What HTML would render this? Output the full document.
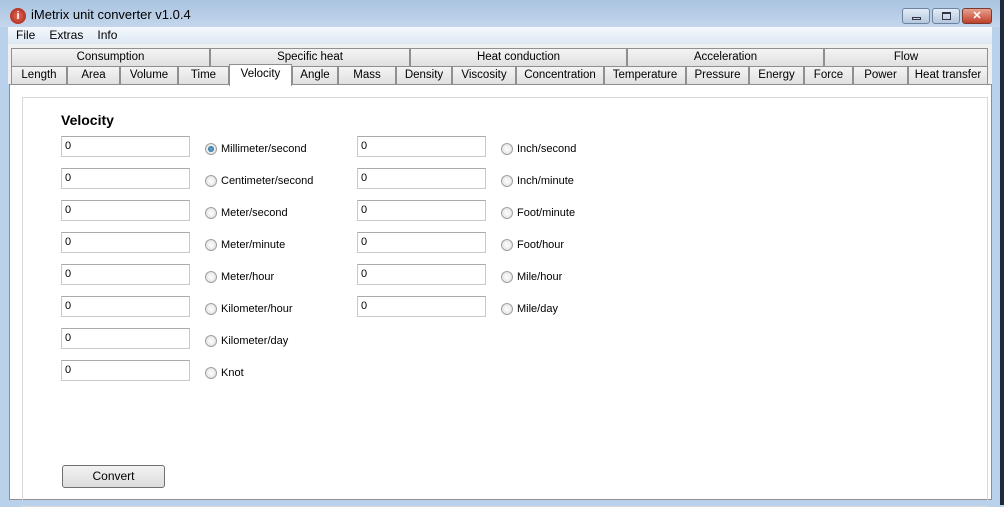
<!DOCTYPE html>
<html><head><style>
*{margin:0;padding:0;box-sizing:border-box}
body{width:1004px;height:505px;overflow:hidden;background:#b9d1ea;font-family:"Liberation Sans",sans-serif;font-size:11px;position:relative;color:#000}
.abs{position:absolute}
.title{left:0;top:0;width:1004px;height:27px;background:linear-gradient(#aac3df,#c3d6ec)}
.menu{left:8px;top:27px;width:984px;height:17px;background:linear-gradient(#f4f8fc,#dde8f4);font-size:12px}
.menu span{margin-left:8px;margin-right:6px;line-height:17px}
.tab{position:absolute;height:18px;border:1px solid #8e8f8f;border-bottom:none;background:linear-gradient(#f4f4f4,#e0e0e0);text-align:center;line-height:17px;font-size:11.5px;white-space:nowrap;overflow:hidden}
.panel{left:9px;top:84px;width:983px;height:416px;background:#fff;border:1px solid #8e8f8f}
.inp{position:absolute;width:129px;height:21px;border:1px solid #c9c9c9;border-top-color:#aaa;background:#fff;padding-left:3px;line-height:19px;font-size:11px}
.rad{position:absolute;width:12px;height:12px;border-radius:50%;border:1px solid #a0a0a0;background:radial-gradient(#fff,#ddd)}
.rad.on::after{content:"";position:absolute;left:2px;top:2px;width:6px;height:6px;border-radius:50%;background:radial-gradient(#6ab0d8,#1a5a8a)}
.lbl{position:absolute;font-size:11px}
</style></head><body>
<div class="abs title"></div>
<div class="abs" style="left:10px;top:8px;width:16px;height:16px;border-radius:50%;background:radial-gradient(#e86a5a,#a01c10);color:#fff;font-weight:bold;font-size:11px;text-align:center;line-height:16px">i</div>
<div class="abs" style="left:31px;top:7px;font-size:13px">iMetrix unit converter v1.0.4</div>
<div class="abs" style="left:902px;top:8px;width:28px;height:16px;border:1px solid #6d84a0;border-radius:3px;background:linear-gradient(#e4ecf6,#b4c7de)"><div class="abs" style="left:9px;top:8px;width:9px;height:3px;border:1px solid #334"></div></div>
<div class="abs" style="left:932px;top:8px;width:28px;height:16px;border:1px solid #6d84a0;border-radius:3px;background:linear-gradient(#e4ecf6,#b4c7de)"><div class="abs" style="left:9px;top:3px;width:9px;height:8px;border:1px solid #334;border-top-width:2px"></div></div>
<div class="abs" style="left:962px;top:8px;width:30px;height:16px;border:1px solid #7a3a30;border-radius:3px;background:linear-gradient(#e8a090,#c0402a);color:#fff;font-weight:bold;text-align:center;line-height:14px;font-size:11px">✕</div>
<div class="abs" style="left:1000px;top:0;width:4px;height:505px;background:#1e2a3a"></div>
<div class="abs menu"><span>File</span><span>Extras</span><span>Info</span></div>
<div class="abs" style="left:8px;top:44px;width:984px;height:40px;background:#f0f0f0"></div>

<div class="tab" style="left:11px;top:48px;width:199px">Consumption</div>
<div class="tab" style="left:210px;top:48px;width:200px">Specific heat</div>
<div class="tab" style="left:410px;top:48px;width:217px">Heat conduction</div>
<div class="tab" style="left:627px;top:48px;width:197px">Acceleration</div>
<div class="tab" style="left:824px;top:48px;width:164px">Flow</div>

<div class="tab" style="left:11px;top:66px;width:56px">Length</div>
<div class="tab" style="left:67px;top:66px;width:53px">Area</div>
<div class="tab" style="left:120px;top:66px;width:58px">Volume</div>
<div class="tab" style="left:178px;top:66px;width:51px">Time</div>
<div class="tab" style="left:292px;top:66px;width:46px">Angle</div>
<div class="tab" style="left:338px;top:66px;width:58px">Mass</div>
<div class="tab" style="left:396px;top:66px;width:56px">Density</div>
<div class="tab" style="left:452px;top:66px;width:64px">Viscosity</div>
<div class="tab" style="left:516px;top:66px;width:88px">Concentration</div>
<div class="tab" style="left:604px;top:66px;width:82px">Temperature</div>
<div class="tab" style="left:686px;top:66px;width:63px">Pressure</div>
<div class="tab" style="left:749px;top:66px;width:55px">Energy</div>
<div class="tab" style="left:804px;top:66px;width:49px">Force</div>
<div class="tab" style="left:853px;top:66px;width:55px">Power</div>
<div class="tab" style="left:908px;top:66px;width:80px">Heat transfer</div>

<div class="abs panel"></div>
<div class="tab" style="left:229px;top:64px;width:63px;height:22px;background:#fff;line-height:18px;z-index:2">Velocity</div>
<div class="abs" style="left:22px;top:97px;width:966px;height:410px;border:1px solid #d8d8d8"></div>

<div class="abs" style="left:61px;top:112px;font-size:14px;font-weight:bold">Velocity</div>

<div class="inp" style="left:61px;top:136px">0</div><div class="rad on" style="left:205px;top:143px"></div><div class="lbl" style="left:221px;top:143px">Millimeter/second</div>
<div class="inp" style="left:61px;top:168px">0</div><div class="rad" style="left:205px;top:175px"></div><div class="lbl" style="left:221px;top:175px">Centimeter/second</div>
<div class="inp" style="left:61px;top:200px">0</div><div class="rad" style="left:205px;top:207px"></div><div class="lbl" style="left:221px;top:207px">Meter/second</div>
<div class="inp" style="left:61px;top:232px">0</div><div class="rad" style="left:205px;top:239px"></div><div class="lbl" style="left:221px;top:239px">Meter/minute</div>
<div class="inp" style="left:61px;top:264px">0</div><div class="rad" style="left:205px;top:271px"></div><div class="lbl" style="left:221px;top:271px">Meter/hour</div>
<div class="inp" style="left:61px;top:296px">0</div><div class="rad" style="left:205px;top:303px"></div><div class="lbl" style="left:221px;top:303px">Kilometer/hour</div>
<div class="inp" style="left:61px;top:328px">0</div><div class="rad" style="left:205px;top:335px"></div><div class="lbl" style="left:221px;top:335px">Kilometer/day</div>
<div class="inp" style="left:61px;top:360px">0</div><div class="rad" style="left:205px;top:367px"></div><div class="lbl" style="left:221px;top:367px">Knot</div>

<div class="inp" style="left:357px;top:136px">0</div><div class="rad" style="left:501px;top:143px"></div><div class="lbl" style="left:517px;top:143px">Inch/second</div>
<div class="inp" style="left:357px;top:168px">0</div><div class="rad" style="left:501px;top:175px"></div><div class="lbl" style="left:517px;top:175px">Inch/minute</div>
<div class="inp" style="left:357px;top:200px">0</div><div class="rad" style="left:501px;top:207px"></div><div class="lbl" style="left:517px;top:207px">Foot/minute</div>
<div class="inp" style="left:357px;top:232px">0</div><div class="rad" style="left:501px;top:239px"></div><div class="lbl" style="left:517px;top:239px">Foot/hour</div>
<div class="inp" style="left:357px;top:264px">0</div><div class="rad" style="left:501px;top:271px"></div><div class="lbl" style="left:517px;top:271px">Mile/hour</div>
<div class="inp" style="left:357px;top:296px">0</div><div class="rad" style="left:501px;top:303px"></div><div class="lbl" style="left:517px;top:303px">Mile/day</div>

<div class="abs" style="left:62px;top:465px;width:103px;height:23px;border:1px solid #707070;border-radius:3px;background:linear-gradient(#f2f2f2,#dcdcdc);text-align:center;line-height:21px;font-size:12px">Convert</div>
<div class="abs" style="left:0;top:500px;width:1000px;height:5px;background:#b9d1ea"></div>
</body></html>
